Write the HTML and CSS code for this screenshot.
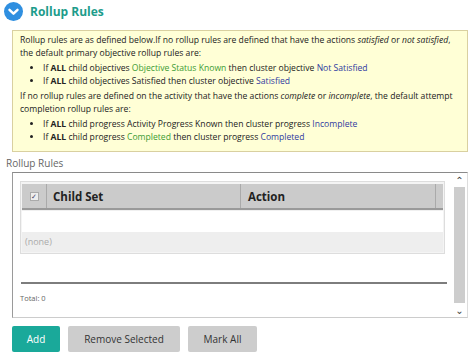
FILE: index.html
```html
<!DOCTYPE html>
<html>
<head>
<meta charset="utf-8">
<link rel="stylesheet" href="styles.css">
</head>
<body>
<div class="page">
  <div class="title">
    <svg class="title-icon" width="19" height="19" viewBox="0 0 20 20"><circle cx="10" cy="10" r="10" fill="#2f8fe0"/><path d="M5.8 8.2 L10 12.2 L14.2 8.2" fill="none" stroke="#fff" stroke-width="2.6" stroke-linecap="round" stroke-linejoin="round"/></svg>
    <span>Rollup Rules</span>
  </div>
  <div class="note">
    <p><span class="ln">Rollup rules are as defined below.If no rollup rules are defined that have the actions <i>satisfied</i> or <i>not satisfied</i>,</span> <span class="ln">the default primary objective rollup rules are:</span></p>
    <ul>
      <li>If <b>ALL</b> child objectives <span class="g">Objective Status Known</span> then cluster objective <span class="b">Not Satisfied</span></li>
      <li>If <b>ALL</b> child objectives Satisfied then cluster objective <span class="b">Satisfied</span></li>
    </ul>
    <p><span class="ln">If no rollup rules are defined on the activity that have the actions <i>complete</i> or <i>incomplete</i>, the default attempt</span> <span class="ln">completion rollup rules are:</span></p>
    <ul>
      <li>If <b>ALL</b> child progress Activity Progress Known then cluster progress <span class="b">Incomplete</span></li>
      <li>If <b>ALL</b> child progress <span class="g">Completed</span> then cluster progress <span class="b">Completed</span></li>
    </ul>
  </div>
  <div class="label">Rollup Rules</div>
  <div class="panel">
    <div class="panel-body">
      <div class="grid">
        <div class="grid-head">
          <div class="c-check"><span class="cb">&#10003;</span></div>
          <div class="c-set">Child Set</div>
          <div class="c-act">Action</div>
          <div class="c-end"></div>
        </div>
        <div class="row-empty"></div>
        <div class="row-none">(none)</div>
      </div>
      <div class="spacer"></div>
      <div class="rule"></div>
      <div class="total">Total: 0</div>
    </div>
    <div class="scroll">
      <div class="arrow">&#8963;</div>
      <div class="track"></div>
      <div class="arrow down">&#8964;</div>
    </div>
  </div>
  <div class="buttons">
    <button class="btn primary">Add</button>
    <button class="btn remove">Remove Selected</button>
    <button class="btn mark">Mark All</button>
  </div>
</div>
</body>
</html>
```
FILE: styles.css
```css
* { box-sizing: border-box; }
body { margin: 0; background: #fff; font-family: "Open Sans", "DejaVu Sans", sans-serif; color: #222; }
.page { width: 474px; height: 364px; overflow: hidden; padding: 2px 6px 0 4px; }
.title { display: flex; align-items: center; gap: 7px; height: 19px; }
.title-icon { display: block; }
.title span { color: #1d9c8b; font-weight: 700; font-size: 12px; }
.note { margin: 9px 0 0 8px; width: 456px; background: #ffffd6; border: 1px solid #d9d0a0; padding: 3px 8px 5px 7px; font-size: 8.6px; line-height: 13px; color: #222; }
.note p { margin: 0; }
.note .ln { display: block; white-space: nowrap; }
.note ul { margin: 2px 0 2px 0; padding-left: 23px; }
.note ul li { margin: 0; white-space: nowrap; }
.note .g { color: #3c9b34; }
.note .b { color: #2f3aa0; }
.label { margin: 4px 0 0 2px; font-size: 10px; color: #666; line-height: 14px; }
.panel { margin: 2px 0 0 8px; width: 456px; height: 146px; border: 1px solid #9a9a9a; border-color: #8a8a8a #ddd #ccc #9a9a9a; display: flex; }
.panel-body { flex: 1; padding: 8px 0 0 7px; display: flex; flex-direction: column; }
.grid { width: 425px; border: 1px solid #ddd; background: #f4f4f4; padding: 2px 1px 1px 1px; }
.grid-head { display: flex; height: 26px; background: #cbcbcb; border-bottom: 2px solid #9a9a9a; font-size: 11.5px; font-weight: 700; color: #222; align-items: stretch; }
.grid-head > div { display: flex; align-items: center; border-right: 1px solid #aaa; }
.c-check { width: 25px; justify-content: center; }
.cb { width: 9px; height: 9px; border: 1px solid #aaa; background: #eee; font-size: 7px; line-height: 7px; text-align: center; color: #446; font-weight: 700; display: block; }
.c-set { width: 194px; padding-left: 6px; }
.c-act { width: 195px; padding-left: 7px; }
.c-end { flex: 1; border-right: none !important; }
.row-empty { height: 22px; background: #fff; border-top: 1px solid #f0f0f0; }
.row-none { height: 20px; background: #eeeeee; font-size: 9px; color: #aaa; line-height: 20px; padding-left: 3px; }
.spacer { height: 28px; }
.rule { width: 426px; height: 2px; background: #7d7d7d; margin-left: 1px; }
.total { font-size: 7.5px; color: #666; margin-top: 9px; }
.scroll { width: 13px; display: flex; flex-direction: column; align-items: center; background: #fff; margin-right: 1px; }
.arrow { height: 14px; font-size: 10px; line-height: 14px; color: #444; }
.track { flex: 1; width: 11px; background: #cdcdcd; }
.buttons { display: flex; gap: 8px; margin: 8px 0 0 8px; }
.btn { height: 26px; border: none; border-radius: 2px; background: #cdcdcd; color: #333; font-family: "Open Sans", sans-serif; font-size: 10px; padding: 0; white-space: nowrap; }
.btn.primary { background: #1aa99a; color: #fff; width: 48px; }
.btn.remove { width: 112px; }
.btn.mark { width: 69px; }
```
